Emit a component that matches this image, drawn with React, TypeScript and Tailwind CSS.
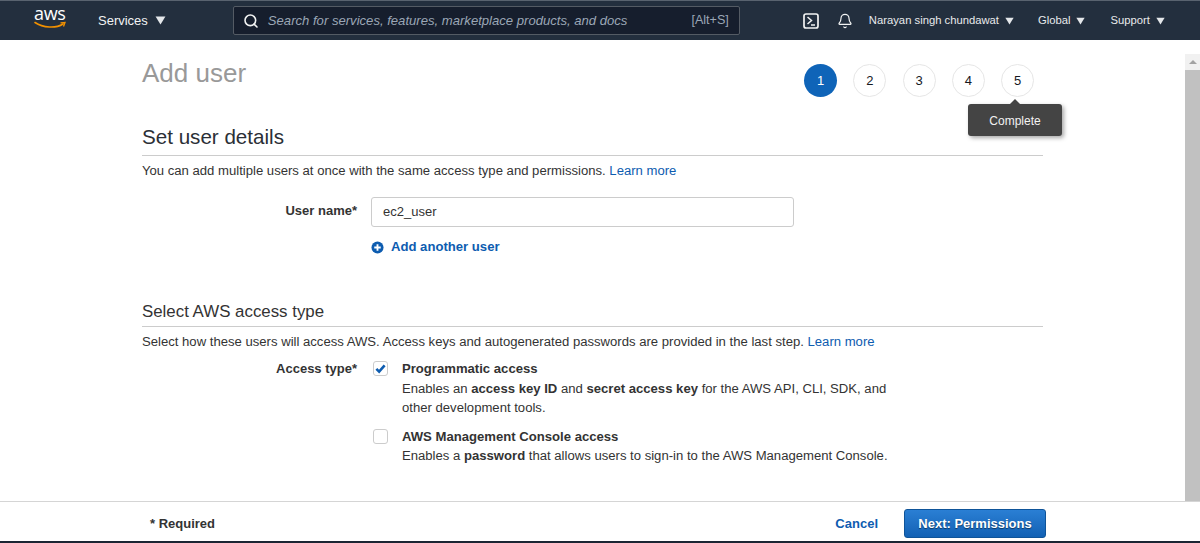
import React from 'react';
import { Search, Bell } from 'lucide-react';

const Caret = ({ className }: { className: string }) => (
  <svg viewBox="0 0 12 10" className={className}>
    <path d="M0.500 0.500h11L6 9.500z" fill="#e4e7ea" />
  </svg>
);

const steps = ['1', '2', '3', '4', '5'];

const App = () => {
  return (
    <div className="h-[543px] w-[1200px] flex flex-col overflow-hidden bg-white font-['Liberation_Sans',Arial,sans-serif] text-[#16191f]">
      {/* top nav */}
      <header className="h-10 shrink-0 flex items-center bg-[#232f3e] border-t border-[#59636f] text-white">
        <div className="w-[98px] shrink-0 pl-[34px] flex flex-col items-start self-start">
          <span className="block w-[30px] text-center text-[18px] leading-[18px] mt-[3px] tracking-[-0.3px] font-['Open_Sans',sans-serif] text-white">aws</span>
          <svg viewBox="0 0 32 8" className="w-[32px] h-[8px] -mt-[1px]">
            <path d="M1 1.500C9 7 22 7.500 29 3" fill="none" stroke="#f29100" strokeWidth="1.600" strokeLinecap="round" />
            <path d="M26.500 1.800L31 1.500L29.500 5.500" fill="none" stroke="#f29100" strokeWidth="1.300" />
          </svg>
        </div>
        <span className="text-[13px] text-[#f2f3f3]">Services</span>
        <Caret className="w-[11px] h-[9px] ml-[7px]" />
        <div className="ml-[67px] w-[507px] h-[29px] flex items-center bg-[#161e2d] border border-[#545b64] rounded-[2px] pl-[9px] pr-[10px]">
          <Search size={16} strokeWidth={2.400} className="text-[#f2f3f3]" />
          <span className="ml-[9px] text-[13.100px] italic text-[#9ba7b6]">Search for services, features, marketplace products, and docs</span>
          <span className="ml-auto text-[12.600px] text-[#9ba7b6]">[Alt+S]</span>
        </div>
        <svg viewBox="0 0 16 16" className="ml-[63px] w-[16px] h-[16px]">
          <rect x="1" y="1" width="14" height="14" rx="2" fill="none" stroke="#f2f3f3" strokeWidth="1.700" />
          <path d="M4.500 4L8.500 7.500L4.500 11M8 12H12" fill="none" stroke="#f2f3f3" strokeWidth="1.500" />
        </svg>
        <Bell size={16} strokeWidth={1.800} className="ml-[18px] text-[#f2f3f3]" />
        <span className="ml-[16px] text-[11.250px] text-[#e8eaec]">Narayan singh chundawat</span>
        <Caret className="w-[9px] h-[8px] ml-[6px]" />
        <span className="ml-[24px] text-[11.250px] text-[#e8eaec]">Global</span>
        <Caret className="w-[9px] h-[8px] ml-[6px]" />
        <span className="ml-[25px] text-[11.250px] text-[#e8eaec]">Support</span>
        <Caret className="w-[9px] h-[8px] ml-[6px]" />
      </header>

      {/* scrollable body */}
      <div className="flex-1 min-h-0 flex">
        <main className="flex-1 min-w-0 pl-[142px] overflow-hidden">
          <div className="w-[901px]">
            <div className="flex justify-between pt-[19px] h-[81px]">
              <h1 className="text-[26px] leading-[28px] text-[#999999]">Add user</h1>
              <div className="relative flex gap-[16.250px] mt-[5px] mr-[9px] h-[33px]">
                {steps.map((s, i) => (
                  <div
                    key={s}
                    className={
                      i === 0
                        ? 'w-[33px] h-[33px] rounded-full flex items-center justify-center text-[13px] bg-[#0f64b8] text-white'
                        : 'w-[33px] h-[33px] rounded-full flex items-center justify-center text-[13px] bg-white border border-[#e6e6e6] text-[#16191f]'
                    }
                  >
                    {s}
                  </div>
                ))}
                <div className="absolute left-[164px] top-[40px] w-[94px] h-[32px] pt-[1px] rounded-[3px] bg-[#444444] text-[#f2f2f2] text-[12px] flex items-center justify-center shadow-[2px_2px_4px_rgba(0,0,0,0.35)]">
                  Complete
                  <span className="absolute -top-[5px] left-[42px] w-0 h-0 border-x-[5px] border-x-transparent border-b-[5px] border-b-[#444444]" />
                </div>
              </div>
            </div>

            <h2 className="text-[20.600px] leading-[24px] text-[#2b2f36] border-b border-[#cccccc] h-[31px] mt-[4px]">Set user details</h2>
            <p className="text-[13.120px] leading-[16px] text-[#333] mt-[7px]">
              You can add multiple users at once with the same access type and permissions. <span className="text-[#0d5cb0]">Learn more</span>
            </p>

            <div className="flex items-start mt-[18px]">
              <label className="w-[215px] text-right text-[13px] font-bold leading-[16px] pt-[6px] text-[#333]">User name*</label>
              <div className="ml-[14px] w-[423px]">
                <div className="h-[30px] border border-[#cccccc] rounded-[3px] px-[11px] flex items-center text-[13px] text-[#333]">ec2_user</div>
                <div className="flex items-center mt-[12px] h-[16px]">
                  <svg viewBox="0 0 14 14" className="w-[13px] h-[13px]">
                    <circle cx="7" cy="7" r="6.500" fill="#0d5cb0" />
                    <path d="M7 3.500V10.500M3.500 7H10.500" stroke="#fff" strokeWidth="2" />
                  </svg>
                  <span className="ml-[7px] text-[13.120px] font-bold text-[#0d5cb0]">Add another user</span>
                </div>
              </div>
            </div>

            <h2 className="mt-[47px] h-[25px] text-[16.870px] leading-[20px] text-[#333] border-b border-[#cccccc]">Select AWS access type</h2>
            <p className="text-[13.120px] leading-[16px] text-[#333] mt-[7px]">
              Select how these users will access AWS. Access keys and autogenerated passwords are provided in the last step. <span className="text-[#0d5cb0]">Learn more</span>
            </p>

            <div className="flex items-start mt-[9px]">
              <label className="w-[215px] text-right text-[13px] font-bold leading-[19px] text-[#333]">Access type*</label>
              <div className="ml-[16px] flex flex-col">
                <div className="flex items-start">
                  <div className="w-[15px] h-[15px] mt-[2px] border border-[#cccccc] rounded-[3px] flex items-center justify-center">
                    <svg viewBox="0 0 12 12" className="w-[11px] h-[11px]">
                      <path d="M1.500 6.500L4.500 9.500L10.500 2.500" fill="none" stroke="#0d5cb0" strokeWidth="2.800" />
                    </svg>
                  </div>
                  <div className="ml-[14px] w-[500px] text-[13.120px] leading-[19.500px] text-[#333]">
                    <div className="font-bold">Programmatic access</div>
                    <div>
                      Enables an <b>access key ID</b> and <b>secret access key</b> for the AWS API, CLI, SDK, and other development tools.
                    </div>
                  </div>
                </div>
                <div className="flex items-start mt-[9px]">
                  <div className="w-[15px] h-[15px] mt-[2px] border border-[#cccccc] rounded-[3px]" />
                  <div className="ml-[14px] w-[500px] text-[13.120px] leading-[19.500px] text-[#333]">
                    <div className="font-bold">AWS Management Console access</div>
                    <div>
                      Enables a <b>password</b> that allows users to sign-in to the AWS Management Console.
                    </div>
                  </div>
                </div>
              </div>
            </div>
          </div>
        </main>

        {/* scrollbar */}
        <div className="w-[15px] shrink-0 mt-[14px] flex flex-col bg-[#f1f1f1]">
          <div className="h-[16px] flex items-center justify-center">
            <span className="w-0 h-0 border-x-[4px] border-x-transparent border-b-[4px] border-b-[#a3a3a3]" />
          </div>
          <div className="flex-1 bg-[#c1c1c1]" />
        </div>
      </div>

      {/* footer */}
      <footer className="h-[42px] shrink-0 flex items-center pt-[4px] bg-white border-t border-[#d5d5d5] border-b-2 border-b-[#1b2533]">
        <span className="ml-[150px] text-[13px] font-bold text-[#333]">* Required</span>
        <span className="ml-auto text-[13px] font-bold text-[#0d5cb0]">Cancel</span>
        <button className="ml-[26px] mr-[154px] w-[142px] h-[29px] rounded-[3px] border border-[#0f5499] bg-gradient-to-b from-[#2a7fd4] to-[#1261b4] text-white text-[13px] font-bold [text-shadow:0_1px_1px_rgba(0,0,0,0.5)]">
          Next: Permissions
        </button>
      </footer>
    </div>
  );
};

export default App;
